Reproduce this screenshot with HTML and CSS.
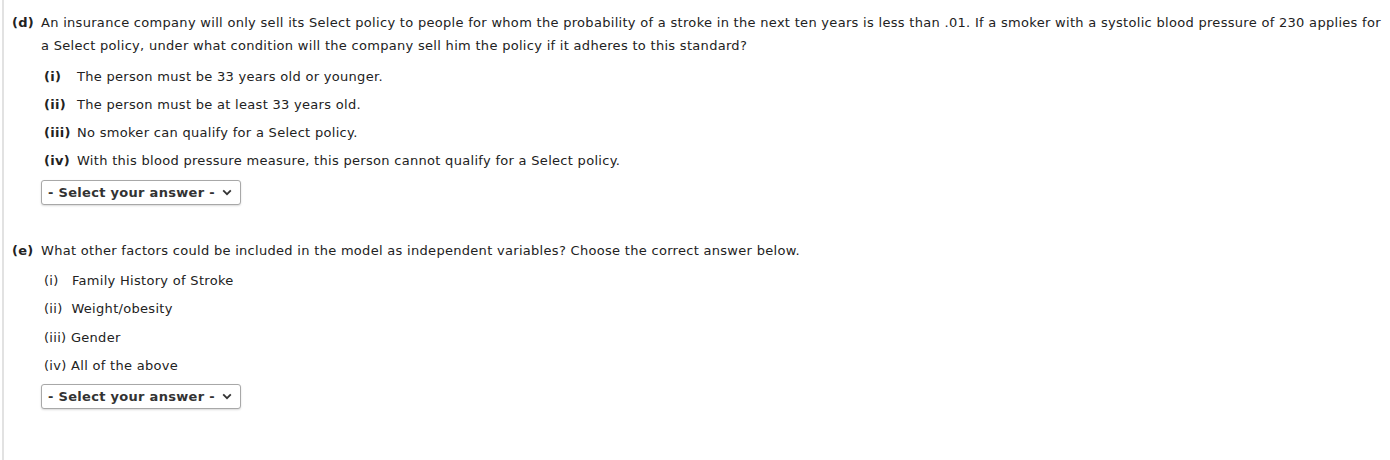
FILE: index.html
```html
<!DOCTYPE html>
<html>
<head>
<meta charset="utf-8">
<link rel="stylesheet" href="styles.css">
</head>
<body>
<div class="panel">
  <div class="question">
    <div class="stem">
      <span class="part">(d)</span>
      <span class="stem-text">An insurance company will only sell its Select policy to people for whom the probability of a stroke in the next ten years is less than .01. If a smoker with a systolic blood pressure of 230 applies for a Select policy, under what condition will the company sell him the policy if it adheres to this standard?</span>
    </div>
    <ul class="options bold-labels">
      <li><span class="opt-label">(i)</span><span>The person must be 33 years old or younger.</span></li>
      <li><span class="opt-label">(ii)</span><span>The person must be at least 33 years old.</span></li>
      <li><span class="opt-label">(iii)</span><span>No smoker can qualify for a Select policy.</span></li>
      <li><span class="opt-label">(iv)</span><span>With this blood pressure measure, this person cannot qualify for a Select policy.</span></li>
    </ul>
    <div class="select-wrap">
      <select class="answer"><option>- Select your answer -</option></select>
      <svg class="chevron" width="10" height="7" viewBox="0 0 10 7"><path d="M1.2 1.4 L5 5.2 L8.8 1.4" fill="none" stroke="#333" stroke-width="1.8"/></svg>
    </div>
  </div>

  <div class="question second">
    <div class="stem">
      <span class="part">(e)</span>
      <span class="stem-text">What other factors could be included in the model as independent variables? Choose the correct answer below.</span>
    </div>
    <ul class="options plain">
      <li>(i)&nbsp;&nbsp; Family History of Stroke</li>
      <li>(ii)&nbsp; Weight/obesity</li>
      <li>(iii) Gender</li>
      <li>(iv) All of the above</li>
    </ul>
    <div class="select-wrap">
      <select class="answer"><option>- Select your answer -</option></select>
      <svg class="chevron" width="10" height="7" viewBox="0 0 10 7"><path d="M1.2 1.4 L5 5.2 L8.8 1.4" fill="none" stroke="#333" stroke-width="1.8"/></svg>
    </div>
  </div>
</div>
</body>
</html>
```

FILE: styles.css
```css
html, body {
  margin: 0;
  padding: 0;
  background: #fff;
}
body {
  font-family: Verdana, "DejaVu Sans", sans-serif;
  font-size: 13px;
  letter-spacing: 0.3px;
  color: #222;
}
.panel {
  margin-left: 2px;
  border-left: 2px solid #e2e2e2;
  padding: 11px 6px 0 8px;
  height: 460px;
  box-sizing: border-box;
}
.stem {
  display: flex;
  line-height: 23px;
}
.part {
  font-weight: bold;
  flex: 0 0 29px;
}
.stem-text {
  flex: 1;
}
.options {
  list-style: none;
  margin: 6px 0 0 0;
  padding: 0 0 0 32px;
}
.options li {
  display: flex;
  line-height: 28px;
  height: 28px;
}
.bold-labels .opt-label {
  font-weight: bold;
  flex: 0 0 33px;
}
.plain li {
  display: block;
  height: 28.3px;
  line-height: 28.3px;
}
.select-wrap {
  position: relative;
  margin: 5px 0 0 29px;
  width: 200px;
  height: 25px;
}
.answer {
  -webkit-appearance: none;
  appearance: none;
  width: 200px;
  height: 25px;
  box-sizing: border-box;
  border: 1px solid #a8a8a8;
  border-radius: 3px;
  background: #fff;
  box-shadow: 0 1px 2px rgba(0,0,0,0.15);
  font-family: Verdana, "DejaVu Sans", sans-serif;
  font-size: 13px;
  letter-spacing: 0.3px;
  font-weight: bold;
  color: #333;
  padding: 0 0 0 6px;
  margin: 0;
}
.chevron {
  position: absolute;
  right: 9px;
  top: 9px;
  pointer-events: none;
}
.second {
  margin-top: 34px;
}
.second .options {
  margin-top: 5px;
}
.second .select-wrap {
  margin-top: 4px;
}
```
